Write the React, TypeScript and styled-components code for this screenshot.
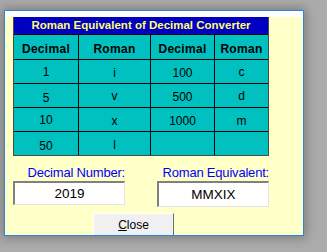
import React from "react";
import styled, { createGlobalStyle } from "styled-components";

const GlobalStyle = createGlobalStyle`
  html, body {
    margin: 0;
    padding: 0;
    background: #ababab;
    overflow: hidden;
  }
  body {
    font-family: "Liberation Sans", Arial, sans-serif;
  }
`;

const Desktop = styled.div`
  width: 327px;
  height: 252px;
  padding: 10px 0 0 4px;
  box-sizing: border-box;
`;

const Window = styled.div`
  width: 300px;
  height: 226px;
  box-sizing: border-box;
  border: 1px solid #2b86d9;
  background: #ffffc8;
  box-shadow: 0 0 10px 2px rgba(0, 0, 0, 0.28);
  display: flex;
  flex-direction: column;
  overflow: hidden;
`;

const TitleStrip = styled.div`
  height: 6px;
  background: #ffffff;
  flex-shrink: 0;
`;

const Body = styled.div`
  padding: 0 0 0 8px;
  display: flex;
  flex-direction: column;
`;

const Table = styled.div`
  width: 256px;
  box-sizing: border-box;
  border-left: 1px solid #4a4a4a;
  border-right: 1px solid #4a4a4a;
  border-bottom: 1px solid #4a4a4a;
`;

const Caption = styled.div`
  height: 17px;
  background: #0000c0;
  color: #ffff70;
  font-weight: bold;
  font-size: 11.5px;
  line-height: 17px;
  text-align: center;
  white-space: nowrap;
`;

const Grid = styled.div`
  display: grid;
  grid-template-columns: 65px 72px 64px 53px;
  grid-template-rows: 25px repeat(4, 24px);
  background: #00c0c0;
`;

const Cell = styled.div<{ $head?: boolean; $last?: boolean; $dy?: number }>`
  box-sizing: border-box;
  border-top: 1px solid #000;
  border-right: ${(p) => (p.$last ? "none" : "1px solid #000")};
  display: flex;
  align-items: center;
  justify-content: center;
  font-size: 12px;
  font-weight: ${(p) => (p.$head ? "bold" : "normal")};
  color: #000;
  padding-top: ${(p) => (p.$head ? 4 : (p.$dy ?? 0) * 2)}px;
  letter-spacing: ${(p) => (p.$head ? "0.3px" : "0")};
`;

const Fields = styled.div`
  display: flex;
  gap: 32px;
  margin-top: 9px;
  width: 256px;
`;

const Field = styled.div`
  width: 112px;
  display: flex;
  flex-direction: column;
`;

const Label = styled.div`
  color: #0000ff;
  font-size: 13px;
  line-height: 15px;
  text-align: right;
  white-space: nowrap;
  letter-spacing: -0.2px;
  margin-bottom: 1px;
`;

const Box = styled.div<{ $h: number }>`
  height: ${(p) => p.$h}px;
  box-sizing: border-box;
  background: #fff;
  border-top: 2px solid #808080;
  border-left: 2px solid #808080;
  border-right: 1px solid #e3e3e3;
  border-bottom: 1px solid #e3e3e3;
  display: flex;
  align-items: center;
  justify-content: center;
  font-size: 13.5px;
  color: #000;
`;

const ButtonRow = styled.div`
  padding-left: 80px;
  margin-top: 6px;
`;

const Button = styled.div`
  width: 81px;
  height: 26px;
  box-sizing: border-box;
  background: #f0f0f0;
  border-top: 1px solid #ffffff;
  border-left: 1px solid #ffffff;
  border-right: 1px solid #707070;
  border-bottom: 1px solid #707070;
  display: flex;
  align-items: center;
  justify-content: center;
  font-size: 12px;
  color: #000;
  padding-bottom: 2px;
  u {
    text-decoration: underline;
  }
`;

const rows: [string, string, string, string, number[]][] = [
  ["1", "i", "100", "c", [0, 1, 1, 0]],
  ["5", "v", "500", "d", [2, -1, 1, -1]],
  ["10", "x", "1000", "m", [0, 1, 1, 1]],
  ["50", "l", "", "", [2, 1, 0, 0]],
];

const App = () => {
  return (
    <>
      <GlobalStyle />
      <Desktop>
        <Window>
          <TitleStrip />
          <Body>
            <Table>
              <Caption>Roman Equivalent of Decimal Converter</Caption>
              <Grid>
                {["Decimal", "Roman", "Decimal", "Roman"].map((h, i) => (
                  <Cell key={"h" + i} $head $last={i === 3}>
                    {h}
                  </Cell>
                ))}
                {rows.map((r, ri) =>
                  [r[0], r[1], r[2], r[3]].map((v, ci) => (
                    <Cell key={ri + "-" + ci} $last={ci === 3} $dy={r[4][ci]}>
                      {v}
                    </Cell>
                  ))
                )}
              </Grid>
            </Table>
            <Fields>
              <Field>
                <Label>Decimal Number:</Label>
                <Box $h={24}>2019</Box>
              </Field>
              <Field>
                <Label>Roman Equivalent:</Label>
                <Box $h={26}>MMXIX</Box>
              </Field>
            </Fields>
            <ButtonRow>
              <Button>
                <span>
                  <u>C</u>lose
                </span>
              </Button>
            </ButtonRow>
          </Body>
        </Window>
      </Desktop>
    </>
  );
};

export default App;
